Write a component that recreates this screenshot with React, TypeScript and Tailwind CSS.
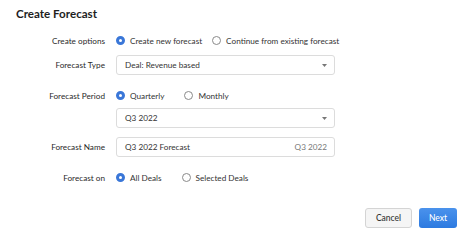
import React from "react";

function Radio({ checked, label }: { checked?: boolean; label: string }) {
  return (
    <div className="flex items-center gap-[5px]">
      {checked ? (
        <span className="w-[9px] h-[9px] rounded-full border-[3px] border-[#3a77d8] bg-white box-border" />
      ) : (
        <span className="w-[9px] h-[9px] rounded-full border border-[#8a8a8a] bg-white box-border" />
      )}
      <span>{label}</span>
    </div>
  );
}

function Caret() {
  return (
    <svg width="5" height="3" viewBox="0 0 5 3" className="mr-[3px]">
      <path d="M0 0 L5 0 L2.5 3 Z" fill="#777" />
    </svg>
  );
}

function Row({ label, children, className }: { label: string; children: React.ReactNode; className?: string }) {
  return (
    <div className={"flex items-center " + (className ?? "")}>
      <div className="w-[105px] text-right text-[#2a2a2a] shrink-0">{label}</div>
      <div className="ml-[11px] flex items-center">{children}</div>
    </div>
  );
}

export default function App() {
  return (
    <div
      className="w-[474px] h-[240px] bg-white text-[8.2px] text-[#333] overflow-hidden"
      style={{ fontFamily: "Lato, 'Noto Sans', sans-serif" }}
    >
      <div className="h-[28px] flex items-center pl-[16px] text-[11.6px] font-bold text-[#1e1e1e]">Create Forecast</div>

      <Row label="Create options" className="h-[20px] mt-[3px]">
        <div className="flex items-center gap-[10px]">
          <Radio checked label="Create new forecast" />
          <Radio label="Continue from existing forecast" />
        </div>
      </Row>

      <Row label="Forecast Type" className="h-[20px] mt-[4px]">
        <div className="w-[219px] h-[20px] border border-[#dcdcdc] rounded-[3px] flex items-center justify-between pl-[8px] pr-[4px]">
          <span>Deal: Revenue based</span>
          <Caret />
        </div>
      </Row>

      <Row label="Forecast Period" className="h-[20px] mt-[11px]">
        <div className="flex items-center gap-[20px]">
          <Radio checked label="Quarterly" />
          <Radio label="Monthly" />
        </div>
      </Row>

      <div className="flex h-[20px] mt-[2px] pl-[116px]">
        <div className="w-[219px] h-[20px] border border-[#dcdcdc] rounded-[3px] flex items-center justify-between pl-[8px] pr-[4px]">
          <span>Q3 2022</span>
          <Caret />
        </div>
      </div>

      <Row label="Forecast Name" className="h-[20px] mt-[9px]">
        <div className="w-[219px] h-[20px] border border-[#dcdcdc] rounded-[3px] flex items-center justify-between pl-[8px] pr-[7px]">
          <span>Q3 2022 Forecast</span>
          <span className="text-[#777]">Q3 2022</span>
        </div>
      </Row>

      <Row label="Forecast on" className="h-[20px] mt-[11px]">
        <div className="flex items-center gap-[20px]">
          <Radio checked label="All Deals" />
          <Radio label="Selected Deals" />
        </div>
      </Row>

      <div className="flex justify-end gap-[7px] mt-[20px] pr-[17px]">
        <button className="w-[47px] h-[20px] rounded-[3px] border border-[#d4d4d4] bg-[#f5f5f5] text-[#333] text-[8.5px] font-medium">
          Cancel
        </button>
        <button className="w-[38px] h-[20px] rounded-[3px] bg-gradient-to-b from-[#4a92ec] to-[#2c7ae0] text-white text-[8.5px] font-medium">
          Next
        </button>
      </div>
    </div>
  );
}
